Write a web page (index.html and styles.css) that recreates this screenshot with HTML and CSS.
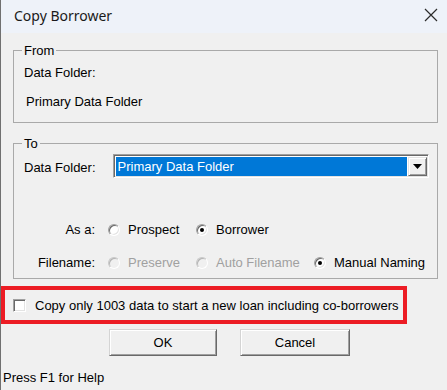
FILE: index.html
```html
<!DOCTYPE html>
<html>
<head>
<meta charset="utf-8">
<link rel="stylesheet" href="styles.css">
</head>
<body>
<div class="window">
  <div class="titlebar">
    <span class="title">Copy Borrower</span>
    <svg class="close" width="14" height="14" viewBox="0 0 14 14"><path d="M1 1 L13 13 M13 1 L1 13" stroke="#2b2b2b" stroke-width="1.2" fill="none"/></svg>
  </div>
  <div class="content">
    <fieldset class="group group-from">
      <legend>From</legend>
      <div class="from-row">Data Folder:</div>
      <div class="from-row from-value">Primary Data Folder</div>
    </fieldset>

    <fieldset class="group group-to">
      <legend>To</legend>
      <div class="folder-row">
        <span class="folder-label">Data Folder:</span>
        <div class="combo">
          <span class="combo-sel">Primary Data Folder</span>
          <span class="combo-btn"><svg width="9" height="5" viewBox="0 0 9 5"><path d="M0 0 H9 L4.5 5 Z" fill="#000"/></svg></span>
        </div>
      </div>
      <div class="opt-row opt-row-first">
        <span class="opt-label">As a:</span>
        <span class="opt"><span class="radio"></span>Prospect</span>
        <span class="opt"><span class="radio checked"></span>Borrower</span>
      </div>
      <div class="opt-row opt-row-second">
        <span class="opt-label">Filename:</span>
        <span class="opt disabled"><span class="radio"></span>Preserve</span>
        <span class="opt disabled"><span class="radio"></span>Auto Filename</span>
        <span class="opt"><span class="radio checked"></span>Manual Naming</span>
      </div>
    </fieldset>

    <div class="highlight">
      <span class="checkbox"></span>
      <span>Copy only 1003 data to start a new loan including co-borrowers</span>
    </div>

    <div class="buttons">
      <button class="btn btn-ok">OK</button>
      <button class="btn btn-cancel">Cancel</button>
    </div>

    <div class="status">Press F1 for Help</div>
  </div>
</div>
</body>
</html>
```
FILE: styles.css
```css
html, body {
  margin: 0;
  padding: 0;
}
body {
  width: 447px;
  height: 390px;
  overflow: hidden;
  background: #f0f0f0;
  font-family: "Liberation Sans", Arial, sans-serif;
  font-size: 13px;
  line-height: 15px;
  color: #000;
}
.window {
  height: 390px;
  border-left: 1px solid #707070;
  background: #f0f0f0;
}
.titlebar {
  height: 33px;
  background: #eef2f9;
  display: flex;
  align-items: center;
  justify-content: space-between;
  padding: 0 9px 0 13px;
}
.title {
  font-family: "Noto Sans", "Open Sans", sans-serif;
  font-size: 14px;
  color: #1a1a1a;
  margin-top: -3px;
}
.close {
  margin-top: -4px;
}
.content {
  padding-top: 10px;
}
.group {
  margin: 0 9px 0 12px;
  padding: 0 8px;
  border: 1px solid #a9a9a9;
  min-inline-size: 0;
}
.group legend {
  padding: 0 2px;
  line-height: 15px;
}
.group-from {
  padding-top: 7px;
  padding-bottom: 13px;
}
.from-row {
  padding-left: 2px;
}
.from-value {
  margin-top: 14px;
  padding-left: 4px;
}
.group-to {
  margin-top: 13px;
  padding-top: 3px;
  padding-bottom: 8px;
}
.folder-row {
  display: flex;
  align-items: center;
  padding-left: 2px;
}
.folder-label {
  width: 89px;
  margin-top: 3px;
}
.combo {
  width: 313px;
  height: 22px;
  display: flex;
  padding: 0 1px 0 2px;
  align-items: center;
  background: #fff;
  border: 1px solid;
  border-color: #a0a0a0 #ffffff #ffffff #a0a0a0;
  box-shadow: inset 1px 1px 0 #696969, inset -1px -1px 0 #e3e3e3;
}
.combo-sel {
  flex: 1;
  background: #0078d7;
  color: #fff;
  height: 19px;
  line-height: 19px;
  padding-left: 2px;
  margin-right: 1px;
}
.combo-btn {
  width: 17px;
  height: 17px;
  display: flex;
  align-items: center;
  justify-content: center;
  background: #f0f0f0;
  border: 1px solid;
  border-color: #e3e3e3 #696969 #696969 #e3e3e3;
  box-shadow: inset 1px 1px 0 #fff, inset -1px -1px 0 #a0a0a0;
}
.opt-row {
  display: grid;
  grid-template-columns: 86px 88px 118px auto;
  align-items: center;
  height: 15px;
}
.opt-row-first {
  margin-top: 44px;
}
.opt-row-second {
  margin-top: 18px;
}
.opt-label {
  text-align: right;
  padding-right: 13px;
}
.opt {
  display: flex;
  align-items: center;
}
.opt.disabled {
  color: #a0a0a0;
}
.radio {
  width: 10px;
  height: 10px;
  border-radius: 50%;
  border: 1px solid;
  border-color: #a0a0a0 #ffffff #ffffff #a0a0a0;
  box-shadow: inset 1px 1px 0 #696969, inset -1px -1px 0 #e3e3e3;
  background: #fff;
  margin-right: 8px;
  position: relative;
  flex: none;
}
.opt.disabled .radio {
  background: #f0f0f0;
  border-color: #c8c8c8 #ffffff #ffffff #c8c8c8;
  box-shadow: inset 1px 1px 0 #b4b4b4;
}
.radio.checked::after {
  content: "";
  position: absolute;
  left: 3px;
  top: 3px;
  width: 4px;
  height: 4px;
  border-radius: 50%;
  background: #000;
}
.highlight {
  margin-top: 7px;
  width: 390px;
  height: 30px;
  border: 4px solid #ec1c24;
  display: flex;
  align-items: center;
  padding-left: 8px;
  box-sizing: content-box;
}
.checkbox {
  width: 11px;
  height: 11px;
  border: 1px solid;
  border-color: #a0a0a0 #ffffff #ffffff #a0a0a0;
  box-shadow: inset 1px 1px 0 #696969, inset -1px -1px 0 #e3e3e3;
  background: #fff;
  margin-right: 9px;
  flex: none;
}
.buttons {
  display: flex;
  gap: 23px;
  margin-top: 5px;
  padding-left: 108px;
}
.btn {
  height: 27px;
  font-family: "Liberation Sans", Arial, sans-serif;
  font-size: 13px;
  color: #000;
  background: #f0f0f0;
  border: 1px solid;
  border-color: #d4d4d4 #696969 #696969 #d4d4d4;
  box-shadow: inset 1px 1px 0 #fff, inset -1px -1px 0 #a0a0a0;
  padding: 0;
}
.btn-ok {
  width: 108px;
}
.btn-cancel {
  width: 110px;
}
.status {
  margin-top: 14px;
  padding-left: 2px;
}
```
